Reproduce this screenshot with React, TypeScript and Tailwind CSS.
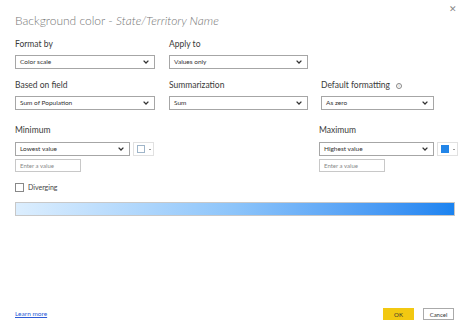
import React from "react";

const font = { fontFamily: 'Lato, "Open Sans", sans-serif' };

const Chevron = () => (
  <svg width="6" height="4" viewBox="0 0 6 4" className="shrink-0">
    <path d="M0.6 0.6 L3 3 L5.4 0.6" fill="none" stroke="#333" strokeWidth="1.3" />
  </svg>
);

const Select = ({ value, width }: { value: string; width: string }) => (
  <div
    className={`${width} h-[14px] border border-[#a6a6a6] bg-white flex items-center justify-between pl-[4px] pr-[5px]`}
  >
    <span className="text-[6.5px] text-[#333] leading-none">{value}</span>
    <Chevron />
  </div>
);

const Label = ({ children }: { children: React.ReactNode }) => (
  <div className="text-[8.5px] text-[#3a3a3a] leading-none h-[9px] flex items-center">{children}</div>
);

const Swatch = ({ color }: { color: string }) => (
  <div className="w-[21px] h-[14px] border border-[#e1e1e1] flex items-center pl-[3px] gap-[4px]">
    <div className={`w-[8px] h-[8px] ${color}`} />
    <div className="w-[2px] h-[1px] bg-[#999]" />
  </div>
);

const ValueInput = () => (
  <div className="w-[66px] h-[13px] border border-[#c8c8c8] bg-white flex items-center pl-[4px]">
    <span className="text-[6px] text-[#888] leading-none">Enter a value</span>
  </div>
);

export default function App() {
  return (
    <div className="w-[474px] h-[334px] bg-white relative overflow-hidden" style={font}>
      <div className="absolute right-[17px] top-[4px] text-[#888] text-[9px] font-light leading-none">✕</div>
      <div className="pl-[15px] pt-[14px] flex flex-col">
        <div className="text-[12px] font-light text-[#777] leading-none h-[14px] flex items-center">
          Background color -&nbsp;<span className="italic">State/Territory Name</span>
        </div>

        <div className="flex mt-[12px]">
          <div className="w-[154px] flex flex-col gap-[6px]">
            <Label>Format by</Label>
            <Select value="Color scale" width="w-[140px]" />
          </div>
          <div className="w-[152px] flex flex-col gap-[6px]">
            <Label>Apply to</Label>
            <Select value="Values only" width="w-[139px]" />
          </div>
        </div>

        <div className="flex mt-[12px]">
          <div className="w-[154px] flex flex-col gap-[6px]">
            <Label>Based on field</Label>
            <Select value="Sum of Population" width="w-[140px]" />
          </div>
          <div className="w-[152px] flex flex-col gap-[6px]">
            <Label>Summarization</Label>
            <Select value="Sum" width="w-[139px]" />
          </div>
          <div className="flex flex-col gap-[6px]">
            <Label>
              Default formatting
              <span className="ml-[6px] inline-flex w-[6px] h-[6px] rounded-full border border-[#888] text-[4px] items-center justify-center text-[#888]">
                i
              </span>
            </Label>
            <Select value="As zero" width="w-[113px]" />
          </div>
        </div>

        <div className="flex mt-[16px]">
          <div className="w-[304px] flex flex-col">
            <Label>Minimum</Label>
            <div className="flex gap-[3px] mt-[7px]">
              <Select value="Lowest value" width="w-[115px]" />
              <Swatch color="bg-white border border-[#9fb5c9]" />
            </div>
            <div className="mt-[3px]">
              <ValueInput />
            </div>
          </div>
          <div className="flex flex-col">
            <Label>Maximum</Label>
            <div className="flex gap-[3px] mt-[7px]">
              <Select value="Highest value" width="w-[115px]" />
              <Swatch color="bg-[#2285e8]" />
            </div>
            <div className="mt-[3px]">
              <ValueInput />
            </div>
          </div>
        </div>

        <div className="flex items-center gap-[4px] mt-[11px]">
          <div className="w-[9px] h-[9px] border border-[#888] bg-white" />
          <span className="text-[7px] text-[#444] leading-none">Diverging</span>
        </div>

        <div className="mt-[10px] w-[440px] h-[14px] border border-[#c8c8c8] bg-gradient-to-r from-[#dceefe] via-[#8cc4fa] to-[#1a83f0]" />
      </div>

      <div className="absolute left-[15px] right-[20px] bottom-[14px] flex items-center justify-between">
        <span className="text-[6.5px] text-[#2d5bd6] underline leading-none">Learn more</span>
        <div className="flex gap-[9px]">
          <div className="w-[31px] h-[12px] bg-[#f2c811] flex items-center justify-center text-[6px] text-[#333]">
            OK
          </div>
          <div className="w-[31px] h-[12px] border border-[#aaa] bg-white flex items-center justify-center text-[6px] text-[#333]">
            Cancel
          </div>
        </div>
      </div>
    </div>
  );
}
